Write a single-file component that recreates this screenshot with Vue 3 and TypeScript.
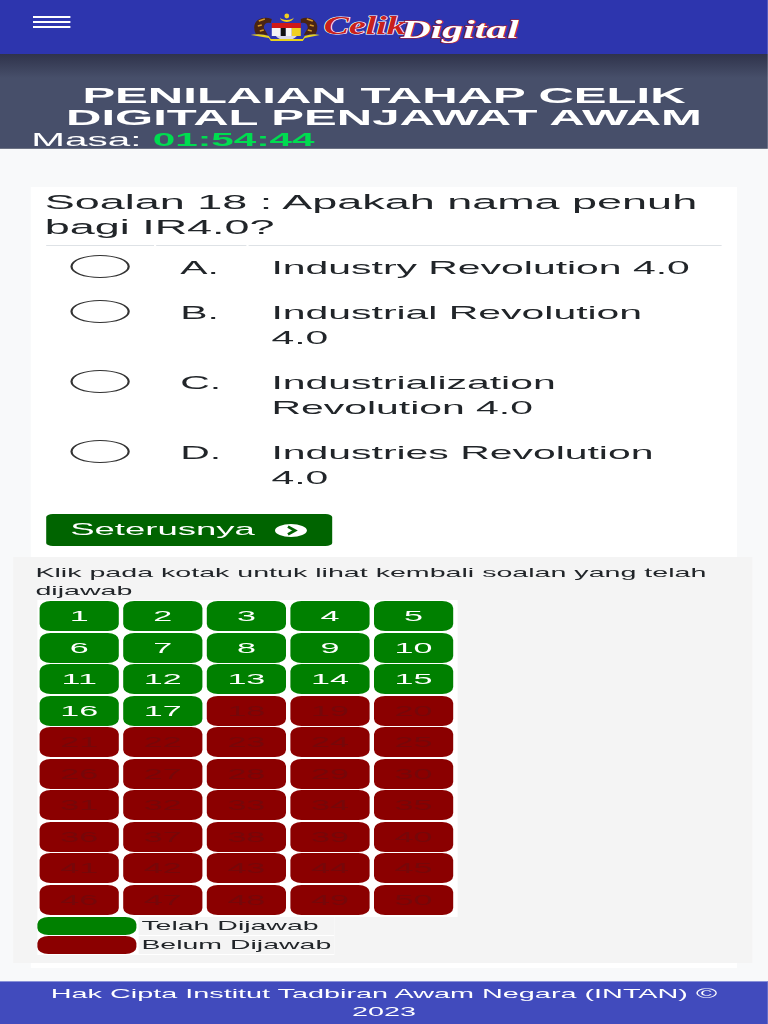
<script setup lang="ts">
interface Option {
  key: string;
  text: string;
}

const options: Option[] = [
  { key: 'A.', text: 'Industry Revolution 4.0' },
  { key: 'B.', text: 'Industrial Revolution 4.0' },
  { key: 'C.', text: 'Industrialization Revolution 4.0' },
  { key: 'D.', text: 'Industries Revolution 4.0' },
];

const answered = 17;
const boxes = Array.from({ length: 50 }, (_, i) => i + 1);
</script>

<template>
  <!-- the reference is a phone page stretched sideways, so the whole page is stretched too -->
  <div class="page">
    <header class="topbar">
      <div class="burger"><span></span><span></span><span></span></div>
      <svg class="logo" viewBox="0 0 270 40" preserveAspectRatio="none">
        <!-- tigers -->
        <path d="M5 24 Q1 15 7 10 Q13 6 21 9 L20 13 Q13 12 13 18 L17 25 Z" fill="#4a2412" />
        <path d="M65 24 Q69 15 63 10 Q57 6 50 9 L50 13 Q57 12 57 18 L53 25 Z" fill="#4a2412" />
        <path d="M8 11 L14 9 M7 16 L11 15 M9 21 L13 20 M62 11 L56 9 M63 16 L59 15 M61 21 L57 20" stroke="#d89a28" stroke-width="1.4" />
        <!-- shield -->
        <rect x="21" y="13" width="29" height="5" fill="#d01818" />
        <rect x="21" y="18" width="9" height="8" fill="#f4f4f4" />
        <rect x="30" y="18" width="5" height="8" fill="#111" />
        <rect x="35" y="18" width="6" height="8" fill="#f6f6f6" />
        <rect x="41" y="18" width="9" height="8" fill="#f0d020" />
        <path d="M25 26 H46 Q43 30 35.5 30 Q28 30 25 26 Z" fill="#d8d8ec" />
        <!-- crescent and star -->
        <path d="M29 7 A7 5 0 0 0 43 7 A7 3 0 0 1 29 7 Z" fill="#f0d020" />
        <circle cx="36" cy="6" r="2.4" fill="#f0d020" />
        <!-- ribbon -->
        <path d="M0 25 Q10 23 18 26 L20 29 H52 L54 26 Q62 23 69 25 L54 28 L52 31 H20 L18 28 Z" fill="#e8d21d" />
        <text x="73" y="24" class="celik" textLength="82" lengthAdjust="spacingAndGlyphs">Celik</text>
        <text x="150" y="28" class="digital" textLength="118" lengthAdjust="spacingAndGlyphs">Digital</text>
      </svg>
    </header>

    <section class="hero">
      <h1>PENILAIAN TAHAP CELIK DIGITAL PENJAWAT AWAM</h1>
      <div class="timer">Masa: <b>01:54:44</b></div>
    </section>

    <main class="main">
      <div class="card">
        <p class="question">Soalan 18 : Apakah nama penuh bagi IR4.0?</p>

        <div class="options">
          <div class="rule"><i></i><i></i><i></i></div>
          <label v-for="opt in options" :key="opt.key" class="option">
            <span class="radio-cell"><input type="radio" name="answer" /></span>
            <span class="opt-key">{{ opt.key }}</span>
            <span class="opt-text">{{ opt.text }}</span>
          </label>
        </div>

        <button class="next" type="button">
          Seterusnya
          <svg class="next-icon" viewBox="0 0 32 13" preserveAspectRatio="none">
            <ellipse cx="16" cy="6.5" rx="16" ry="6.5" fill="#fff" />
            <path d="M13 2.6 L20 6.5 L13 10.4" fill="none" stroke="#006400" stroke-width="2.8" />
          </svg>
        </button>

        <div class="panel">
          <p class="hint">Klik pada kotak untuk lihat kembali soalan yang telah dijawab</p>
          <div class="grid">
            <button
              v-for="n in boxes"
              :key="n"
              type="button"
              class="box"
              :class="n <= answered ? 'done' : 'todo'"
            >
              {{ n }}
            </button>
          </div>
          <div class="legend">
            <span class="swatch done"></span>
            <span class="legend-label">Telah Dijawab</span>
            <span class="swatch todo"></span>
            <span class="legend-label">Belum Dijawab</span>
          </div>
        </div>
      </div>
    </main>

    <footer class="footer">Hak Cipta Institut Tadbiran Awam Negara (INTAN) © 2023</footer>
  </div>
</template>

<style>
html,
body {
  margin: 0;
  background: #f8f9fa;
  overflow: hidden;
}
</style>

<style scoped>
.page {
  width: 349.1px;
  height: 1024px;
  transform: scaleX(2.2);
  transform-origin: 0 0;
  font-family: 'Liberation Sans', Arial, sans-serif;
  color: #212529;
  background: #f8f9fa;
  display: flex;
  flex-direction: column;
}

.topbar {
  height: 54px;
  flex: none;
  background: #2d35ae;
  display: flex;
  align-items: flex-start;
  padding-left: 15px;
  box-sizing: border-box;
}

.burger {
  width: 16.8px;
  margin-top: 16px;
  margin-right: 81.8px;
  display: flex;
  flex-direction: column;
  gap: 3px;
}

.burger span {
  height: 2px;
  background: #fff;
}

.logo {
  width: 122.7px;
  height: 40px;
  margin-top: 10px;
}

.celik {
  font: italic bold 25px 'Liberation Serif', serif;
  fill: #c8201c;
  stroke: #fff;
  stroke-width: 1.2px;
  paint-order: stroke;
}

.digital {
  font: italic bold 25px 'Liberation Serif', serif;
  fill: #fff;
  stroke: #b01818;
  stroke-width: 1.2px;
  paint-order: stroke;
}

.hero {
  height: 95px;
  flex: none;
  box-sizing: border-box;
  padding: 31px 14.2px 0;
  background: linear-gradient(#2f334b 0, #474f6a 24px);
  border-bottom: 1px solid #6c7283;
  color: #fff;
}

.hero h1 {
  margin: 0;
  font-size: 22.3px;
  line-height: 22px;
  font-weight: 700;
  text-align: center;
}

.timer {
  font-size: 18.4px;
  line-height: 19px;
  margin-top: 1px;
}

.timer b {
  color: #00dc50;
}

.main {
  flex: 1;
  padding: 38px 14.1px 0 13.6px;
}

.card {
  background: #fff;
  padding: 2px 7.3px 5px;
}

.question {
  margin: 0 0 0 -0.6px;
  font-size: 20.45px;
  line-height: 25px;
  padding-bottom: 6px;
}

.options {
  width: 306.8px;
}

.rule,
.option {
  display: grid;
  grid-template-columns: 49.5px 40.5px 1fr;
  column-gap: 1px;
}

.rule i {
  border-top: 1px solid #dee2e6;
}

.rule {
  height: 1px;
}

.option {
  padding-top: 9px;
  padding-bottom: 11px;
  font-size: 18.6px;
  line-height: 25px;
}

.radio-cell {
  padding-left: 11.4px;
}

.radio-cell input {
  appearance: none;
  display: block;
  width: 26.8px;
  height: 23px;
  margin: 0;
  box-sizing: border-box;
  border: 1px solid #333;
  border-radius: 50%;
  background: #fff;
}

.opt-key,
.opt-text {
  padding-left: 10.5px;
}

.opt-text {
  padding-right: 12px;
}

.next {
  display: flex;
  align-items: center;
  width: 130.5px;
  height: 32px;
  margin-top: 13px;
  padding: 0 0 0 11px;
  border: none;
  border-radius: 3px;
  background: #006400;
  color: #fff;
  font-family: inherit;
  font-size: 16.6px;
}

.next-icon {
  width: 14.5px;
  height: 13px;
  margin-left: 9.5px;
}

.panel {
  margin: 11px -14.1px 0 -14.5px;
  padding: 7px 10px 8px 10.3px;
  background: #f4f4f4;
}

.hint {
  margin: 0 0 0 -0.6px;
  font-size: 13px;
  line-height: 18px;
}

.grid {
  width: 191.4px;
  display: grid;
  grid-template-columns: repeat(5, 36.9px);
  grid-auto-rows: 30px;
  gap: 1.5px 1.1px;
  padding: 1px 0.9px 2.5px;
  box-sizing: border-box;
  background: #fff;
}

.box {
  padding: 0;
  border: none;
  border-radius: 5px / 7px;
  font-family: inherit;
  font-size: 15.5px;
}

.done {
  background: #008000;
  color: #fff;
}

.todo {
  background: #8b0000;
  color: #760709;
}

.legend {
  width: 135.5px;
  display: grid;
  grid-template-columns: 45px 1fr;
  grid-auto-rows: 18px;
  gap: 1px 1.4px;
  padding: 0 0 1px 0.2px;
  box-sizing: border-box;
  background: #fff;
}

.swatch {
  border-radius: 5px / 7px;
}

.legend-label {
  padding-left: 1px;
  background: #f4f4f4;
  font-size: 12.95px;
  line-height: 18px;
}

.footer {
  flex: none;
  height: 43px;
  box-sizing: border-box;
  padding: 3px 8px 0;
  background: #414bbd;
  border-top: 1px solid #8a92d8;
  color: #fff;
  font-size: 13.1px;
  line-height: 18px;
  text-align: center;
}
</style>
